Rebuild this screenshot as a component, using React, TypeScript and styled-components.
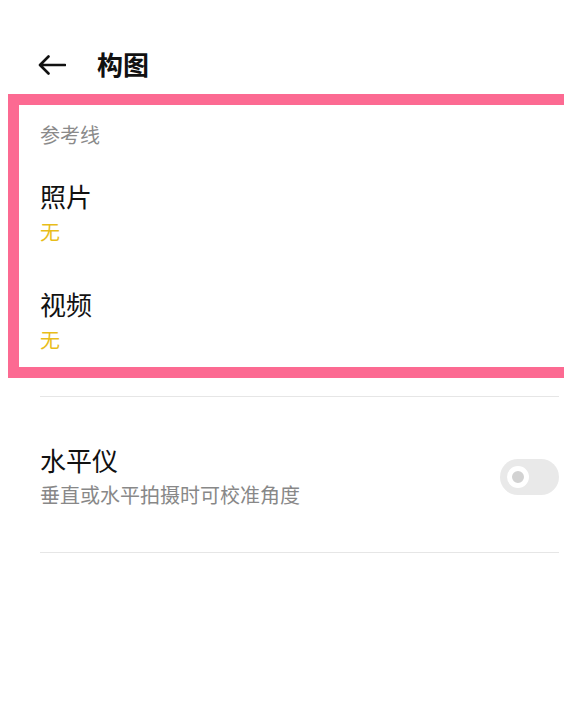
import React from "react";
import styled, { createGlobalStyle } from "styled-components";

const GlobalStyle = createGlobalStyle`
  html, body {
    margin: 0;
    padding: 0;
    background: #ffffff;
    overflow: hidden;
  }
  body {
    font-family: "Noto Sans", "Noto Sans CJK SC", sans-serif;
    color: #111111;
  }
`;

const Page = styled.div`
  width: 564px;
  min-height: 720px;
  background: #ffffff;
`;

const Header = styled.header`
  display: flex;
  align-items: center;
  height: 58px;
  margin-top: 36px;
  padding-left: 38px;
  gap: 31px;
`;

const BackButton = styled.button`
  display: flex;
  align-items: center;
  justify-content: center;
  width: 28px;
  height: 28px;
  padding: 0;
  border: none;
  background: none;
  cursor: pointer;
`;

const Title = styled.h1`
  margin: 0;
  font-size: 26px;
  line-height: 32px;
  font-weight: 700;
  color: #111111;
`;

const Highlight = styled.section`
  margin-left: 8px;
  border: 11px solid #fc6a92;
  border-right: none;
  padding: 19px 0 14px 21px;
`;

const GroupLabel = styled.div`
  font-size: 20px;
  line-height: 24px;
  color: #8a8a8a;
  margin-bottom: 33px;
`;

const OptionList = styled.div`
  display: flex;
  flex-direction: column;
  gap: 44px;
`;

const Option = styled.div`
  display: flex;
  flex-direction: column;
  gap: 8px;
`;

const ItemTitle = styled.div`
  font-size: 26px;
  line-height: 32px;
  color: #111111;
`;

const ItemValue = styled.div`
  font-size: 20px;
  line-height: 24px;
  color: #e8bd1a;
`;

const Rest = styled.div`
  padding: 18px 5px 0 40px;
`;

const Divider = styled.hr`
  margin: 0;
  border: none;
  height: 1px;
  background: #e6e6e6;
`;

const Row = styled.div`
  display: flex;
  align-items: center;
  justify-content: space-between;
  padding: 48px 0 43px;
`;

const RowText = styled.div`
  display: flex;
  flex-direction: column;
  gap: 6px;
`;

const Subtitle = styled.div`
  font-size: 20px;
  line-height: 26px;
  color: #888888;
`;

const Toggle = styled.div<{ $on?: boolean }>`
  display: flex;
  align-items: center;
  box-sizing: border-box;
  width: 59px;
  height: 36px;
  padding-left: 7px;
  border-radius: 18px;
  background: ${(p) => (p.$on ? "#2f7cf6" : "#e9e9e9")};
`;

const Knob = styled.span`
  box-sizing: border-box;
  width: 22px;
  height: 22px;
  border-radius: 50%;
  border: 5px solid #ffffff;
  background: #d2d2d2;
`;

function BackArrow() {
  return (
    <svg width="28" height="20" viewBox="0 0 28 20" fill="none">
      <path
        d="M27 10H2.5M10.5 1.5L2 10l8.5 8.5"
        stroke="#111111"
        strokeWidth="2.6"
        strokeLinecap="round"
        strokeLinejoin="round"
      />
    </svg>
  );
}

const guideOptions = [
  { title: "照片", value: "无" },
  { title: "视频", value: "无" },
];

export default function App() {
  return (
    <Page>
      <GlobalStyle />
      <Header>
        <BackButton aria-label="返回">
          <BackArrow />
        </BackButton>
        <Title>构图</Title>
      </Header>

      <Highlight>
        <GroupLabel>参考线</GroupLabel>
        <OptionList>
          {guideOptions.map((o) => (
            <Option key={o.title}>
              <ItemTitle>{o.title}</ItemTitle>
              <ItemValue>{o.value}</ItemValue>
            </Option>
          ))}
        </OptionList>
      </Highlight>

      <Rest>
        <Divider />
        <Row>
          <RowText>
            <ItemTitle>水平仪</ItemTitle>
            <Subtitle>垂直或水平拍摄时可校准角度</Subtitle>
          </RowText>
          <Toggle>
            <Knob />
          </Toggle>
        </Row>
        <Divider />
      </Rest>
    </Page>
  );
}
